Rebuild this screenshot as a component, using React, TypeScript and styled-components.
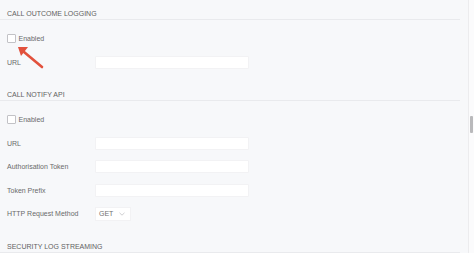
import React from 'react';
import styled, { createGlobalStyle } from 'styled-components';

const GlobalStyle = createGlobalStyle`
  html, body {
    margin: 0;
    padding: 0;
    background: #f7f8fa;
    font-family: "Liberation Sans", Arial, sans-serif;
  }
`;

const Frame = styled.div`
  display: flex;
  width: 474px;
  height: 253px;
  overflow: hidden;
  background: #f7f8fa;
`;

const Main = styled.div`
  position: relative;
  flex: 1;
  padding-top: 10px;
  display: flex;
  flex-direction: column;
  gap: 22.5px;
`;

const Track = styled.div`
  width: 5px;
  border-left: 1px solid #ececee;
  background: #fbfbfc;
  padding-top: 116px;
  display: flex;
  justify-content: center;
`;

const Thumb = styled.div`
  width: 3px;
  height: 17px;
  background: #b9b9bb;
  border-radius: 1px;
`;

const Section = styled.section`
  display: flex;
  flex-direction: column;
`;

const SectionTitle = styled.div`
  font-size: 7px;
  line-height: 8px;
  color: #626262;
  text-transform: uppercase;
  padding: 0 0 1px 7px;
  margin-right: 8px;
  border-bottom: 1px solid #e9eaed;
`;

const Body = styled.div`
  padding: 12px 0 0 7px;
  display: flex;
  flex-direction: column;
  gap: 10.5px;
`;

const Row = styled.div`
  display: flex;
  align-items: center;
  height: 13px;
`;

const Label = styled.span`
  width: 88px;
  font-size: 7px;
  color: #6a6a6a;
`;

const Input = styled.div`
  width: 154px;
  height: 13px;
  box-sizing: border-box;
  background: #fff;
  border: 1px solid #f2f2f4;
  border-radius: 1px;
`;

const Select = styled.div`
  width: 36px;
  height: 14px;
  box-sizing: border-box;
  background: #fff;
  border: 1px solid #f2f2f4;
  display: flex;
  align-items: center;
  justify-content: space-between;
  padding: 0 5px 0 3px;
  font-size: 7px;
  color: #707070;
`;

const Check = styled.span`
  width: 8.5px;
  height: 8.5px;
  box-sizing: border-box;
  border: 1px solid #c2c2c6;
  border-radius: 1px;
  background: #fff;
  margin-right: 3px;
`;

const CheckText = styled.span`
  font-size: 7px;
  color: #6a6a6a;
`;

const Arrow = styled.svg`
  position: absolute;
  left: 14px;
  top: 41px;
`;

const Field = ({ label }: { label: string }) => (
  <Row>
    <Label>{label}</Label>
    <Input />
  </Row>
);

const Enabled = () => (
  <Row>
    <Check />
    <CheckText>Enabled</CheckText>
  </Row>
);

const App: React.FC = () => (
  <>
    <GlobalStyle />
    <Frame>
      <Main>
        <Section>
          <SectionTitle>Call Outcome Logging</SectionTitle>
          <Body>
            <Enabled />
            <Field label="URL" />
          </Body>
        </Section>
        <Section>
          <SectionTitle>Call Notify API</SectionTitle>
          <Body>
            <Enabled />
            <Field label="URL" />
            <Field label="Authorisation Token" />
            <Field label="Token Prefix" />
            <Row>
              <Label>HTTP Request Method</Label>
              <Select>
                GET
                <svg width="6" height="4" viewBox="0 0 6 4">
                  <path d="M0.5 0.8 L3 3.2 L5.5 0.8" fill="none" stroke="#c9c9cc" strokeWidth="0.9" />
                </svg>
              </Select>
            </Row>
          </Body>
        </Section>
        <Section>
          <SectionTitle>Security Log Streaming</SectionTitle>
        </Section>
        <Arrow width="32" height="30" viewBox="0 0 32 30">
          <line x1="28" y1="26" x2="10" y2="11" stroke="#e2513c" strokeWidth="2.6" strokeLinecap="round" />
          <polygon points="4,6 14,6 7,15" fill="#e2513c" />
        </Arrow>
      </Main>
      <Track>
        <Thumb />
      </Track>
    </Frame>
  </>
);

export default App;
